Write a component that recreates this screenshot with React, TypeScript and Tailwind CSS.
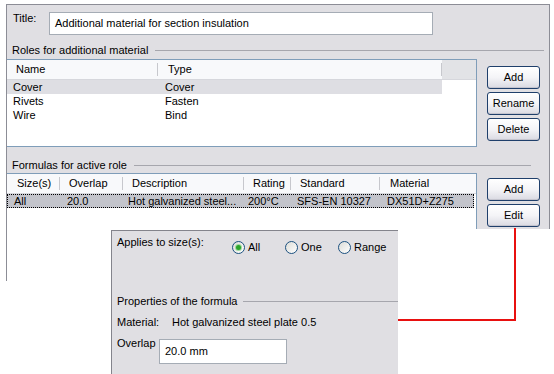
import React from 'react';

const FONT = "font-['Liberation_Sans',Arial,sans-serif]";

const XpButton = ({ label }: { label: string }) => (
  <div className="w-[53px] h-[23px] rounded-[3px] border border-[#1f3f6b] bg-linear-to-b from-white via-[#f4f4f7] to-[#dadae2] shadow-[inset_0_-1px_0_#c4c4ce] flex items-center justify-center text-black leading-[13px]">
    {label}
  </div>
);

const GroupLabel = ({ text, right }: { text: string; right: string }) => (
  <div className={`flex items-center h-[13px] pl-[5px] ${right}`}>
    <span className="leading-[13px] whitespace-nowrap">{text}</span>
    <div className="flex-1 ml-[7px] h-px bg-[#a6a6ad]" />
  </div>
);

const Sep = () => <div className="w-px h-[13px] bg-[#c7c8cd] shrink-0" />;

const Radio = ({ checked, label }: { checked?: boolean; label: string }) => (
  <div className="flex items-center w-[53px]">
    <div className="w-[13px] h-[13px] rounded-full border border-[#1c5180] bg-linear-to-br from-[#dcdcd7] to-white flex items-center justify-center shrink-0">
      {checked && <div className="w-[5px] h-[5px] rounded-full bg-[#2ca52c] shadow-[0_0_0_1px_#9fd99f]" />}
    </div>
    <span className="ml-[3px] leading-[13px]">{label}</span>
  </div>
);

const roles = [
  { name: 'Cover', type: 'Cover' },
  { name: 'Rivets', type: 'Fasten' },
  { name: 'Wire', type: 'Bind' },
];

export default function App() {
  return (
    <div className={`relative w-[554px] h-[374px] bg-white overflow-hidden text-[11px] text-black ${FONT}`}>
      {/* main dialog, cropped */}
      <div className="ml-[6px] mt-[4px] w-[544px] h-[225px] bg-[#e0dfe3] border-t border-l border-r border-[#8c8d96] overflow-hidden flex flex-col">
        <div className="flex mt-[7px] h-[23px]">
          <div className="w-[42px] pl-[6px] leading-[13px]">Title:</div>
          <div className="w-[384px] h-[23px] border border-[#a5acb5] bg-white pl-[5px] flex items-center leading-[13px]">
            Additional material for section insulation
          </div>
        </div>

        <div className="mt-[9px]">
          <GroupLabel text="Roles for additional material" right="pr-[5px]" />
        </div>

        <div className="flex mt-[2px]">
          <div className="w-[470px] h-[88px] bg-white border-t border-r border-b border-[#7f9db9] flex flex-col">
            <div className="flex h-[20px] border-b border-[#d6d7dc]">
              <div className="flex items-center w-[435px] bg-[#f8f9fb]">
                <div className="w-[150px] pl-[9px] leading-[13px]">Name</div>
                <Sep />
                <div className="w-[283px] pl-[10px] leading-[13px]">Type</div>
                <Sep />
              </div>
              <div className="flex-1 bg-[#e2e3e6]" />
            </div>
            {roles.map((r, i) => (
              <div key={r.name} className={`flex items-center h-[14px] w-[435px] ${i === 0 ? 'bg-[#dedee3]' : ''}`}>
                <div className="w-[151px] pl-[6px] leading-[13px]">{r.name}</div>
                <div className="pl-[7px] leading-[13px]">{r.type}</div>
              </div>
            ))}
          </div>
          <div className="ml-[10px] pt-[7px] flex flex-col gap-[3px]">
            <XpButton label="Add" />
            <XpButton label="Rename" />
            <XpButton label="Delete" />
          </div>
        </div>

        <div className="mt-[12px]">
          <GroupLabel text="Formulas for active role" right="pr-[18px]" />
        </div>

        <div className="flex mt-[1px] flex-1">
          <div className="w-[470px] bg-white border-t border-r border-[#7f9db9] flex flex-col">
            <div className="flex items-center h-[20px] border-b border-[#d6d7dc] bg-[#f8f9fb]">
              <div className="w-[52px] pl-[10px] leading-[13px]">Size(s)</div>
              <Sep />
              <div className="w-[62px] pl-[9px] leading-[13px]">Overlap</div>
              <Sep />
              <div className="w-[120px] pl-[9px] leading-[13px]">Description</div>
              <Sep />
              <div className="w-[46px] pl-[9px] leading-[13px]">Rating</div>
              <Sep />
              <div className="w-[88px] pl-[9px] leading-[13px]">Standard</div>
              <Sep />
              <div className="flex-1 pl-[10px] leading-[13px]">Material</div>
            </div>
            <div className="flex items-center h-[14px] w-[467px] bg-[#c3c4cb] outline-1 outline-dotted outline-black -outline-offset-1 whitespace-nowrap">
              <div className="w-[53px] pl-[7px] leading-[13px]">All</div>
              <div className="w-[63px] pl-[7px] leading-[13px]">20.0</div>
              <div className="w-[121px] pl-[5px] leading-[13px]">Hot galvanized steel...</div>
              <div className="w-[47px] pl-[4px] leading-[13px]">200°C</div>
              <div className="w-[89px] pl-[6px] leading-[13px]">SFS-EN 10327</div>
              <div className="pl-[7px] leading-[13px]">DX51D+Z275</div>
            </div>
          </div>
          <div className="ml-[10px] pt-[5px] flex flex-col gap-[3px]">
            <XpButton label="Add" />
            <XpButton label="Edit" />
          </div>
        </div>
      </div>
      <div className="ml-[6px] w-px h-[52px] bg-[#8c8d96]" />

      {/* edit popup, laid over the list */}
      <div className="absolute left-[111px] top-[230px] w-[287px] h-[144px] bg-[#e0dfe3] border-t border-l border-[#84848c] flex flex-col">
        <div className="flex items-start mt-[5px]">
          <div className="w-[120px] pl-[5px] leading-[13px]">Applies to size(s):</div>
          <div className="flex mt-[5px]">
            <Radio checked label="All" />
            <Radio label="One" />
            <Radio label="Range" />
          </div>
        </div>
        <div className="flex items-center h-[13px] pl-[5px] mt-[41px]">
          <span className="leading-[13px] whitespace-nowrap">Properties of the formula</span>
          <div className="flex-1 ml-[6px] h-px bg-[#a6a6ad]" />
        </div>
        <div className="flex mt-[8px] leading-[13px]">
          <div className="w-[60px] pl-[5px]">Material:</div>
          <div>Hot galvanized steel plate 0.5</div>
        </div>
        <div className="flex items-start mt-[8px]">
          <div className="w-[47px] pl-[5px] leading-[13px]">Overlap</div>
          <div className="mt-[2px] w-[128px] h-[25px] border border-[#a5acb5] bg-white pl-[5px] flex items-center leading-[13px]">
            20.0 mm
          </div>
        </div>
      </div>

      {/* red connector from Edit button to popup */}
      <div className="absolute left-[514px] top-[228px] w-[2px] h-[93px] bg-[#e8100f]" />
      <div className="absolute left-[398px] top-[319px] w-[118px] h-[2px] bg-[#e8100f]" />
    </div>
  );
}
